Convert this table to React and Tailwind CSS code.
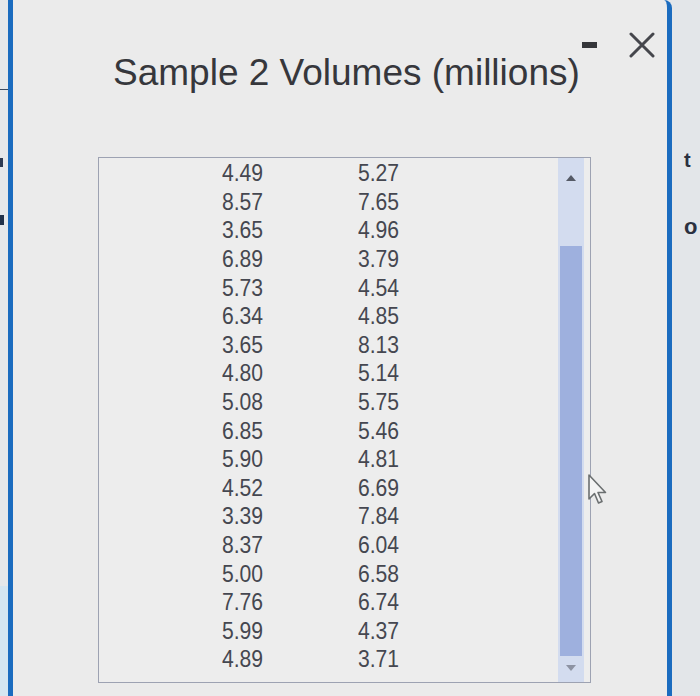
import React from "react";

const rows = [
  ["4.49", "5.27"],
  ["8.57", "7.65"],
  ["3.65", "4.96"],
  ["6.89", "3.79"],
  ["5.73", "4.54"],
  ["6.34", "4.85"],
  ["3.65", "8.13"],
  ["4.80", "5.14"],
  ["5.08", "5.75"],
  ["6.85", "5.46"],
  ["5.90", "4.81"],
  ["4.52", "6.69"],
  ["3.39", "7.84"],
  ["8.37", "6.04"],
  ["5.00", "6.58"],
  ["7.76", "6.74"],
  ["5.99", "4.37"],
  ["4.89", "3.71"],
];

const Cursor = () => (
  <svg className="absolute left-[587px] top-[473px]" width="24" height="34" viewBox="0 0 24 34">
    <path
      d="M2 2 L2 26 L7.5 20.5 L11.5 30 L15 28.5 L11 19.5 L18.5 19.5 Z"
      fill="#f4f4f4"
      stroke="#6b6f70"
      strokeWidth="1.6"
      strokeLinejoin="round"
    />
  </svg>
);

const Scrollbar = () => (
  <div className="flex flex-col w-[26px] mr-[6px] bg-[#d3dcef]">
    <div className="h-[88px] flex justify-center pt-[17px]">
      <div className="w-0 h-0 border-x-[5px] border-x-transparent border-b-[6px] border-b-[#555a66]" />
    </div>
    <div className="flex-1 mx-[2px] bg-[#9eb0de]" />
    <div className="h-[26px] flex justify-center pt-[9px]">
      <div className="w-0 h-0 border-x-[5px] border-x-transparent border-t-[6px] border-t-[#8d93a3]" />
    </div>
  </div>
);

export default function App() {
  return (
    <div
      className="w-[700px] h-[696px] flex bg-[#e3e6e9] overflow-hidden relative"
      style={{ fontFamily: '"Liberation Sans", Arial, sans-serif' }}
    >
      {/* left edge of page behind */}
      <div className="w-[8px] flex flex-col bg-[#e6e8ea]">
        <div className="h-[89px]" />
        <div className="h-[1px] bg-[#3a4a60]" />
        <div className="h-[68px]" />
        <div className="h-[9px] w-[3px] bg-[#2d3a52]" />
        <div className="h-[48px]" />
        <div className="h-[10px] w-[4px] bg-[#22324a]" />
        <div className="flex-1" />
        <div className="h-[110px] bg-[#d5e6f1]" />
      </div>

      {/* dialog window */}
      <div className="w-[664px] h-full flex flex-col bg-[#ebebeb] border-x-[5px] border-x-[#1b6cbf] rounded-tr-[8px]">
        <div className="h-[157px] flex items-start">
          <div className="mt-[54px] ml-[100px] text-[37px] leading-[37px] text-[#36373c] whitespace-nowrap">
            Sample 2 Volumes (millions)
          </div>
          <div className="ml-auto mt-[42px] w-[15px] h-[6px] bg-[#35363a]" />
          <svg className="ml-[32px] mr-[12px] mt-[32px]" width="26" height="26" viewBox="0 0 26 26">
            <path d="M2 2 L24 24 M24 2 L2 24" stroke="#45464c" strokeWidth="3" strokeLinecap="round" />
          </svg>
        </div>

        <div className="ml-[85px] w-[493px] h-[526px] border border-[#9da2b2] bg-[#ededed] flex">
          <div className="flex-1 flex flex-col pt-[1px]">
            {rows.map(([a, b], i) => (
              <div key={i} className="h-[28.6px] flex items-center text-[24px] leading-none text-[#454750]">
                <span className="ml-[123px] w-[136px] origin-left scale-x-[0.88]">{a}</span>
                <span className="origin-left scale-x-[0.88]">{b}</span>
              </div>
            ))}
          </div>
          <Scrollbar />
        </div>
      </div>

      {/* right edge of page behind */}
      <div className="flex-1 flex flex-col pl-[12px] text-[#2b3140]">
        <div className="h-[150px]" />
        <div className="text-[20px] leading-[20px] font-bold">t</div>
        <div className="h-[46px]" />
        <div className="text-[22px] leading-[22px] font-bold">o</div>
      </div>

      <Cursor />
    </div>
  );
}
